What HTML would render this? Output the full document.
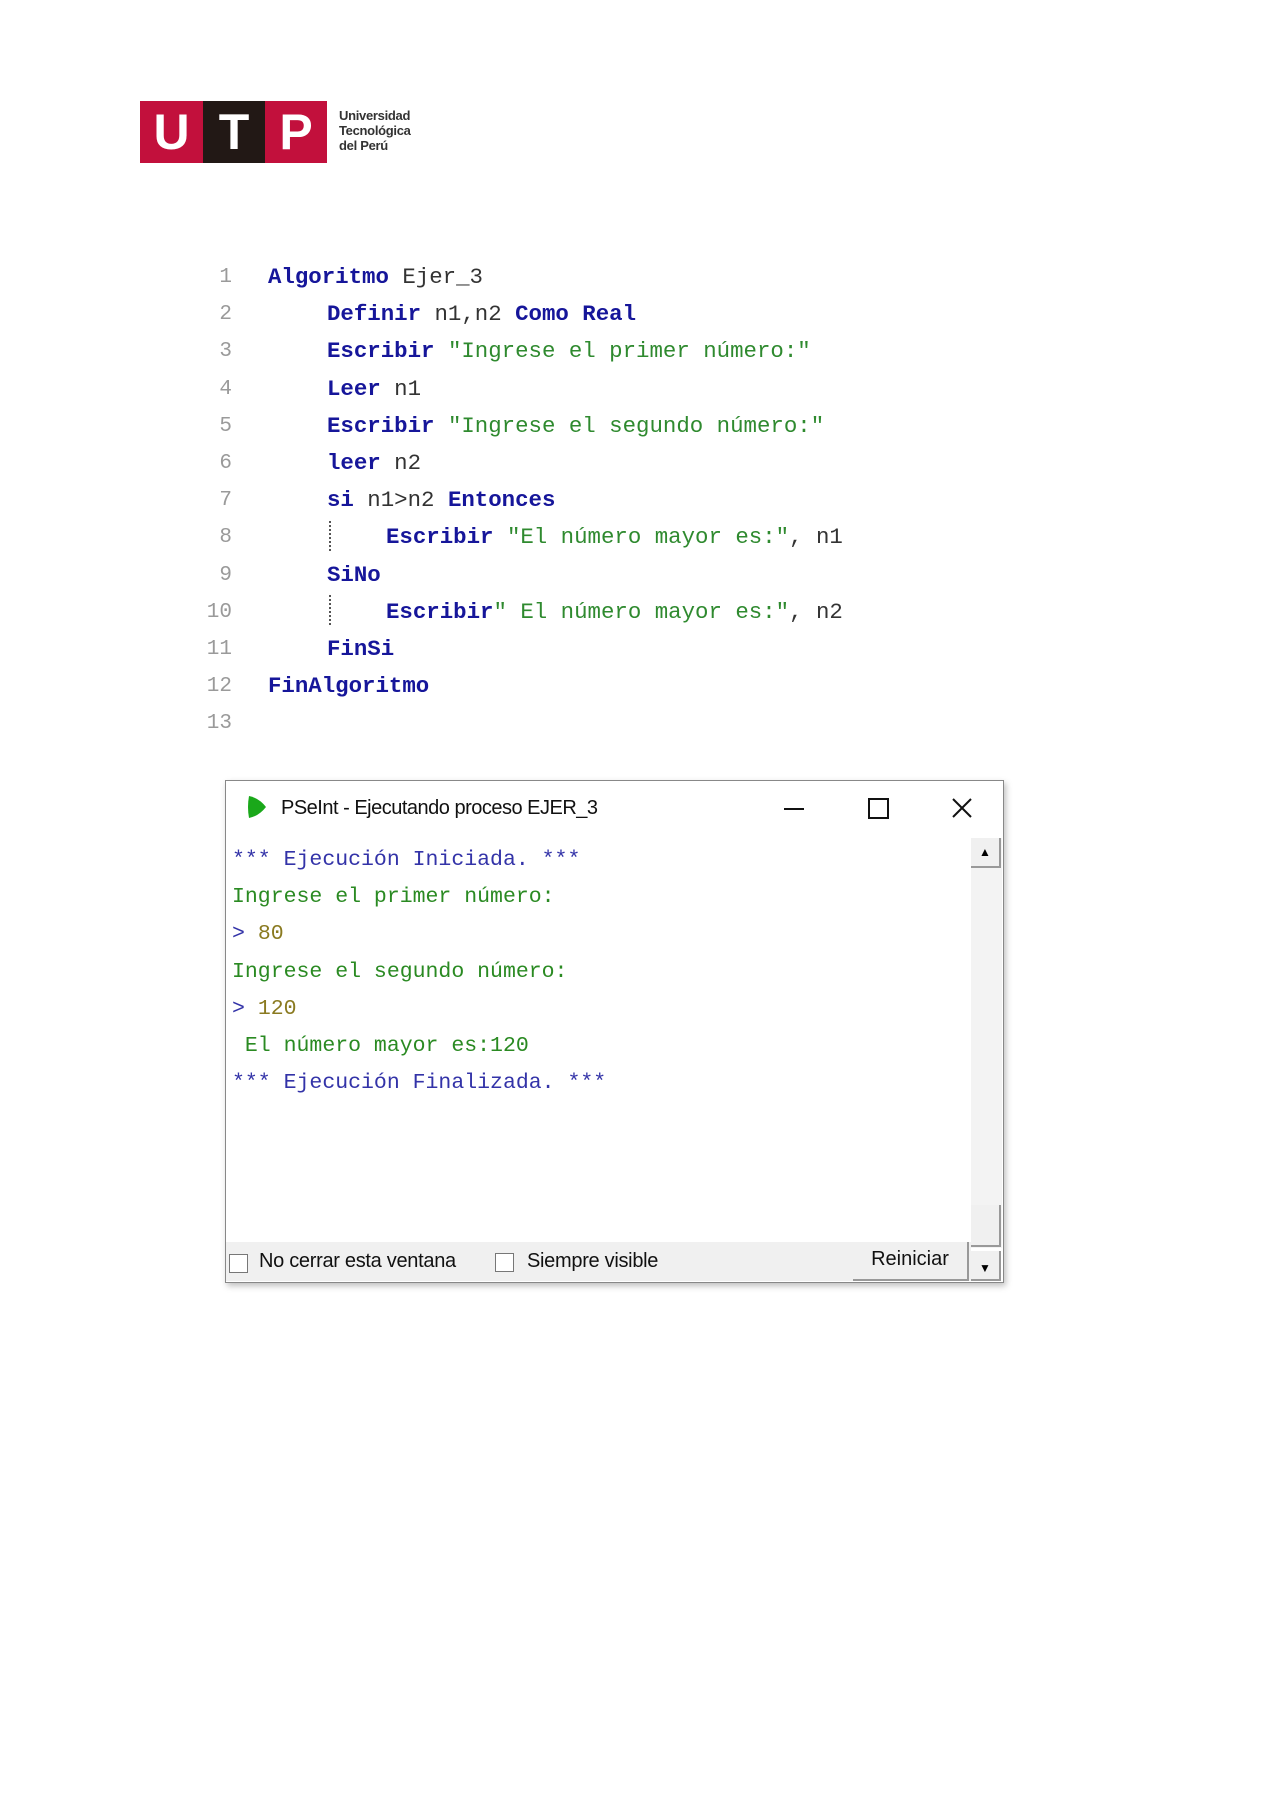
<!DOCTYPE html>
<html><head><meta charset="utf-8"><style>
body{margin:0;width:1280px;height:1811px;background:#fff;position:relative;overflow:hidden;font-family:"Liberation Sans",sans-serif}
.a{position:absolute}
.code{position:absolute;top:259px;left:0;font-family:"Liberation Mono",monospace;font-size:22.4px;line-height:37.2px;white-space:pre}
.ln{position:absolute;width:232px;text-align:right;color:#9a9a9a;font-size:21px}
.t{position:absolute;color:#333}
.k{color:#16169a;font-weight:bold}
.s{color:#2f8a2f}
.con{position:absolute;left:232px;top:842px;font-family:"Liberation Mono",monospace;font-size:21.5px;line-height:37.2px;white-space:pre}
.b{color:#3333a8}.g{color:#2a8a22}.o{color:#8a7a20}
</style></head><body>
<div class="a" style="left:140px;top:101px;width:187px;height:62px;background:#c2103c"></div>
<div class="a" style="left:203px;top:101px;width:62px;height:62px;background:#221815"></div>
<div class="a" style="left:140px;top:101px;width:187px;height:62px;display:flex;color:#fff;font-weight:bold;font-size:50px;line-height:62px">
<span style="width:63px;text-align:center">U</span><span style="width:62px;text-align:center">T</span><span style="width:62px;text-align:center">P</span></div>
<div class="a" style="left:339px;top:108px;font-size:13px;line-height:15px;font-weight:bold;color:#333;letter-spacing:-0.3px">Universidad<br>Tecnológica<br>del Perú</div>

<div class="code">
<div class="ln" style="top:0">1</div><div class="t" style="left:268px;top:0"><span class="k">Algoritmo</span> Ejer_3</div>
<div class="ln" style="top:37.2px">2</div><div class="t" style="left:327px;top:37.2px"><span class="k">Definir</span> n1,n2 <span class="k">Como Real</span></div>
<div class="ln" style="top:74.4px">3</div><div class="t" style="left:327px;top:74.4px"><span class="k">Escribir</span> <span class="s">"Ingrese el primer número:"</span></div>
<div class="ln" style="top:111.6px">4</div><div class="t" style="left:327px;top:111.6px"><span class="k">Leer</span> n1</div>
<div class="ln" style="top:148.8px">5</div><div class="t" style="left:327px;top:148.8px"><span class="k">Escribir</span> <span class="s">"Ingrese el segundo número:"</span></div>
<div class="ln" style="top:186px">6</div><div class="t" style="left:327px;top:186px"><span class="k">leer</span> n2</div>
<div class="ln" style="top:223.2px">7</div><div class="t" style="left:327px;top:223.2px"><span class="k">si</span> n1&gt;n2 <span class="k">Entonces</span></div>
<div class="ln" style="top:260.4px">8</div><div class="t" style="left:386px;top:260.4px"><span class="k">Escribir</span> <span class="s">"El número mayor es:"</span>, n1</div>
<div class="ln" style="top:297.6px">9</div><div class="t" style="left:327px;top:297.6px"><span class="k">SiNo</span></div>
<div class="ln" style="top:334.8px">10</div><div class="t" style="left:386px;top:334.8px"><span class="k">Escribir</span><span class="s">" El número mayor es:"</span>, n2</div>
<div class="ln" style="top:372px">11</div><div class="t" style="left:327px;top:372px"><span class="k">FinSi</span></div>
<div class="ln" style="top:409.2px">12</div><div class="t" style="left:268px;top:409.2px"><span class="k">FinAlgoritmo</span></div>
<div class="ln" style="top:446.4px">13</div>
</div>
<div class="a" style="left:329px;top:521px;height:30px;border-left:2px dotted #555"></div>
<div class="a" style="left:329px;top:595px;height:30px;border-left:2px dotted #555"></div>

<div class="a" style="left:225px;top:780px;width:777px;height:501px;border:1px solid #888;box-shadow:2px 3px 6px rgba(0,0,0,.25);background:#fff"></div>
<svg class="a" style="left:243px;top:794px" width="26" height="26" viewBox="0 0 26 26"><path d="M6 2 Q4 13 6 24 Q16 22 23 13 Q16 4 6 2Z" fill="#1aa81a"/></svg>
<div class="a" style="left:281px;top:797px;font-size:20px;color:#111;letter-spacing:-0.5px">PSeInt - Ejecutando proceso EJER_3</div>
<div class="a" style="left:784px;top:808px;width:20px;height:2px;background:#111"></div>
<div class="a" style="left:868px;top:798px;width:17px;height:17px;border:2px solid #111"></div>
<svg class="a" style="left:951px;top:797px" width="22" height="22"><path d="M2 2L20 20M20 2L2 20" stroke="#111" stroke-width="2"/></svg>

<div class="con"><span class="b">*** Ejecución Iniciada. ***</span>
<span class="g">Ingrese el primer número:</span>
<span class="b">&gt;</span> <span class="o">80</span>
<span class="g">Ingrese el segundo número:</span>
<span class="b">&gt;</span> <span class="o">120</span>
<span class="g"> El número mayor es:120</span>
<span class="b">*** Ejecución Finalizada. ***</span></div>

<div class="a" style="left:971px;top:838px;width:31px;height:410px;background:#f3f3f3"></div>
<div class="a" style="left:971px;top:838px;width:28px;height:28px;background:#f0f0f0;border-right:2px solid #999;border-bottom:2px solid #999;font-size:12px;text-align:center;line-height:28px">▲</div>
<div class="a" style="left:971px;top:1205px;width:28px;height:40px;background:#f0f0f0;border-right:2px solid #999;border-bottom:2px solid #999"></div>
<div class="a" style="left:971px;top:1251px;width:28px;height:28px;background:#f0f0f0;border-right:2px solid #999;border-bottom:2px solid #999;font-size:12px;text-align:center;line-height:34px">▼</div>
<div class="a" style="left:226px;top:1242px;width:745px;height:39px;background:#f0f0f0"></div>
<div class="a" style="left:229px;top:1254px;width:17px;height:17px;border:1px solid #777;background:#fff"></div>
<div class="a" style="left:259px;top:1250px;font-size:20px;color:#111;letter-spacing:-0.3px">No cerrar esta ventana</div>
<div class="a" style="left:495px;top:1253px;width:17px;height:17px;border:1px solid #777;background:#fff"></div>
<div class="a" style="left:527px;top:1250px;font-size:20px;color:#111;letter-spacing:-0.3px">Siempre visible</div>
<div class="a" style="left:853px;top:1242px;width:114px;height:37px;background:#f0f0f0;border-right:2px solid #999;border-bottom:2px solid #999;font-size:20px;text-align:center;line-height:34px;color:#111">Reiniciar</div>
</body></html>
